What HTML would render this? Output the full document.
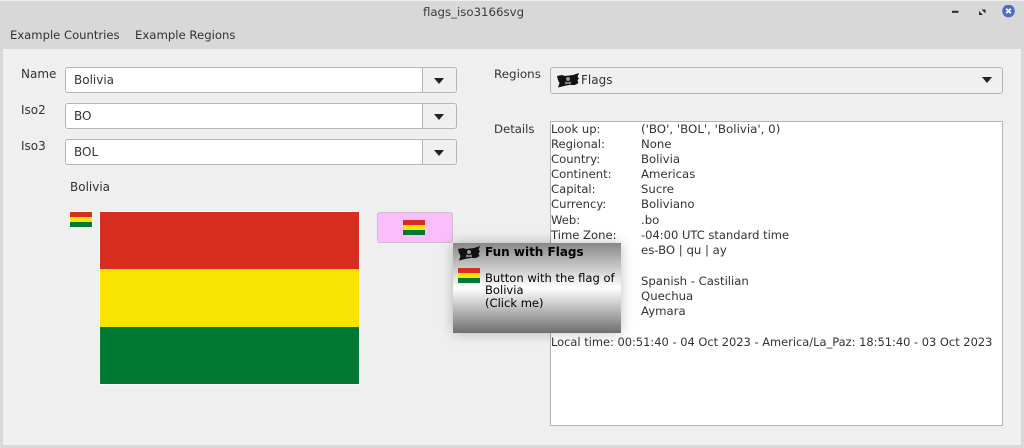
<!DOCTYPE html>
<html>
<head>
<meta charset="utf-8">
<style>
html,body{margin:0;padding:0;}
body{width:1024px;height:448px;overflow:hidden;position:relative;background:#d8d8d8;font-family:"DejaVu Sans",sans-serif;font-size:12px;color:#2e3436;}
.a{position:absolute;white-space:nowrap;line-height:15px;}
.box{position:absolute;box-sizing:border-box;background:#fff;border:1px solid #b4b4b4;border-radius:3px;}
.combo{position:absolute;box-sizing:border-box;left:65px;width:392px;height:26px;background:#fff;border:1px solid #b4b4b4;border-radius:3px;}
.combo .t{position:absolute;left:8px;top:5px;line-height:15px;}
.combo .s{position:absolute;right:0;top:0;bottom:0;width:33px;background:#f0f0f0;border-left:1px solid #b4b4b4;border-radius:0 2px 2px 0;}
.tri{position:absolute;width:0;height:0;border-left:5.5px solid transparent;border-right:5.5px solid transparent;border-top:6px solid #232323;}
.flag{position:absolute;outline:1px solid rgba(255,255,255,.75);}
.flag i{display:block;width:100%;height:33.34%;}
.r{background:#d82e1f}.y{background:#f9e300}.g{background:#007a33}
.ln{position:absolute;left:551px;white-space:nowrap;line-height:15px;font-size:11.6px;}
.v{position:absolute;left:641px;white-space:nowrap;line-height:15px;font-size:11.7px;}
</style>
</head>
<body>
<div style="position:absolute;left:0;top:0;width:1024px;height:1px;background:#efefef"></div>
<div class="a" style="left:0;width:947px;text-align:center;top:5px;color:#3c3c3c;font-size:11.75px;">flags_iso3166svg</div>

<svg style="position:absolute;left:945px;top:5px" width="79" height="20" viewBox="0 0 79 20">
<rect x="7" y="5.8" width="6.5" height="2" fill="#2a2a2a"/>
<path d="M34 6v4h4zM40.5 8.5v-4h-4z" fill="#2a2a2a"/>
<circle cx="63.5" cy="6" r="6.3" fill="#4a6cc7"/>
<path d="M61.2 3.7l4.6 4.6M65.8 3.7l-4.6 4.6" stroke="#fff" stroke-width="1.8"/>
</svg>

<div class="a" style="left:10px;top:28px;font-size:11.6px;">Example Countries</div>
<div class="a" style="left:135px;top:28px;font-size:11.7px;">Example Regions</div>

<div style="position:absolute;left:3px;top:49px;width:1018px;height:396px;background:#efefef;"></div>

<div class="a" style="left:21px;top:67px;">Name</div>
<div class="a" style="left:21px;top:103px;">Iso2</div>
<div class="a" style="left:21px;top:139px;">Iso3</div>

<div class="combo" style="top:67px"><div class="t">Bolivia</div><div class="s"><div class="tri" style="left:11px;top:10px"></div></div></div>
<div class="combo" style="top:103px"><div class="t">BO</div><div class="s"><div class="tri" style="left:11px;top:10px"></div></div></div>
<div class="combo" style="top:139px"><div class="t">BOL</div><div class="s"><div class="tri" style="left:11px;top:10px"></div></div></div>

<div class="a" style="left:70px;top:180px;">Bolivia</div>

<div class="flag" style="left:70px;top:212px;width:22px;height:15px"><i class="r"></i><i class="y"></i><i class="g"></i></div>
<div class="flag" style="left:100px;top:212px;width:259px;height:172px"><i class="r"></i><i class="y"></i><i class="g"></i></div>

<div style="position:absolute;box-sizing:border-box;left:377px;top:212px;width:76px;height:31px;background:#fcbdfc;border:1px solid #c9c0c9;border-radius:3px;"></div>
<div class="flag" style="left:403px;top:220px;width:22px;height:15px;outline:none"><i class="r"></i><i class="y"></i><i class="g"></i></div>

<div class="a" style="left:494px;top:67px;font-size:11.9px;">Regions</div>
<div class="box" style="left:550px;top:67px;width:453px;height:27px;background:#f0f0f0;"></div>
<svg style="position:absolute;left:557px;top:72px" width="22" height="16" viewBox="0 0 22 16">
<path d="M0 4L5 3L8 4L12 3.5L16 3L22 1L20.5 5L22 6L20.5 8.5L21.5 11L18 13L12 13L7 14L1 15.5L2.5 11L1 8Z" fill="#111"/>
<circle cx="11" cy="7" r="2" fill="#999"/>
<path d="M8 10l6 2M14 10l-6 2" stroke="#999" stroke-width="1"/>
</svg>
<div class="a" style="left:581px;top:73px;">Flags</div>
<div class="tri" style="left:982px;top:77px"></div>

<div class="a" style="left:494px;top:122px;font-size:11.7px;">Details</div>
<div style="position:absolute;box-sizing:border-box;left:550px;top:121px;width:453px;height:305px;background:#fff;border:1px solid #b4b4b4;"></div>

<div class="ln" style="top:122px">Look up:</div><div class="v" style="top:122px;font-size:11.83px">('BO', 'BOL', 'Bolivia', 0)</div>
<div class="ln" style="top:137px">Regional:</div><div class="v" style="top:137px">None</div>
<div class="ln" style="top:152px">Country:</div><div class="v" style="top:152px">Bolivia</div>
<div class="ln" style="top:167px">Continent:</div><div class="v" style="top:167px">Americas</div>
<div class="ln" style="top:182px">Capital:</div><div class="v" style="top:182px">Sucre</div>
<div class="ln" style="top:197px">Currency:</div><div class="v" style="top:197px">Boliviano</div>
<div class="ln" style="top:213px">Web:</div><div class="v" style="top:213px">.bo</div>
<div class="ln" style="top:228px">Time Zone:</div><div class="v" style="top:228px;font-size:11.5px">-04:00 UTC standard time</div>
<div class="v" style="top:243px">es-BO | qu | ay</div>
<div class="v" style="top:274px;font-size:11.67px">Spanish - Castilian</div>
<div class="v" style="top:289px">Quechua</div>
<div class="v" style="top:304px">Aymara</div>
<div class="ln" style="top:335px;font-size:11.43px">Local time: 00:51:40 - 04 Oct 2023 - America/La_Paz: 18:51:40 - 03 Oct 2023</div>

<div style="position:absolute;left:453px;top:243px;width:168px;height:90px;background:linear-gradient(to bottom,#888 0%,#fff 50%,#6e6e6e 100%);box-shadow:0 0 12px rgba(0,0,0,.25);color:#000;">
<svg style="position:absolute;left:5px;top:2px" width="22" height="16" viewBox="0 0 22 16">
<path d="M0 4L5 3L8 4L12 3.5L16 3L22 1L20.5 5L22 6L20.5 8.5L21.5 11L18 13L12 13L7 14L1 15.5L2.5 11L1 8Z" fill="#111"/>
<circle cx="11" cy="7" r="2" fill="#999"/>
<path d="M8 10l6 2M14 10l-6 2" stroke="#999" stroke-width="1"/>
</svg>
<div class="a" style="left:32px;top:2px;font-weight:bold;">Fun with Flags</div>
<div class="flag" style="left:5px;top:25px;width:22px;height:15px;outline:none"><i class="r"></i><i class="y"></i><i class="g"></i></div>
<div class="a" style="left:32px;top:29px;line-height:12.3px;font-size:11.55px;">Button with the flag of<br>Bolivia<br>(Click me)</div>
</div>
</body>
</html>
